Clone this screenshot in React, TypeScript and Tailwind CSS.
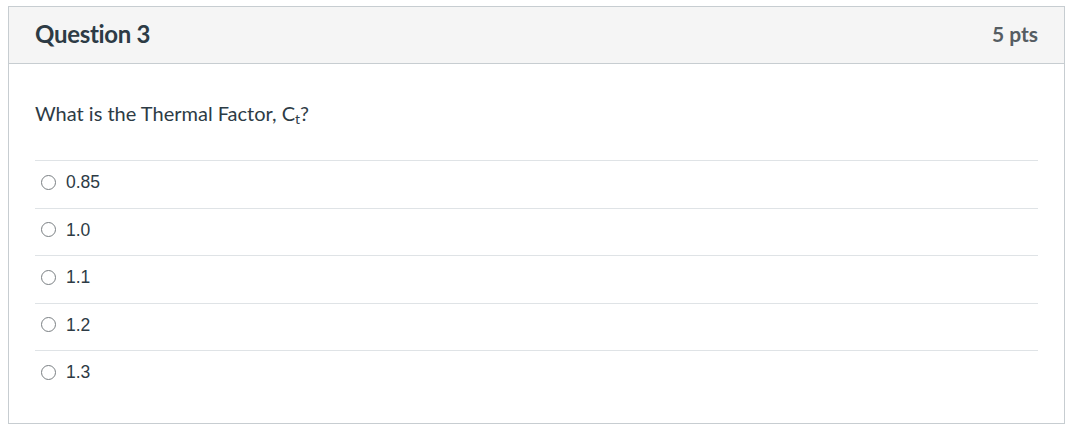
import React from "react";

const options = ["0.85", "1.0", "1.1", "1.2", "1.3"];

export default function App() {
  return (
    <div className="bg-white w-[1077px] h-[443px] pl-[8px] pt-[6px]">
      <div className="w-[1057px] h-[418px] border border-[#c7cdd1] flex flex-col">
        <div className="h-[57px] bg-[#f5f5f5] border-b border-[#c7cdd1] flex items-center justify-between px-[26px] pb-[2px] text-[#2d3b45]" style={{ fontFamily: "Lato, sans-serif" }}>
          <span className="text-[24px] font-bold tracking-[-0.3px]">Question 3</span>
          <span className="text-[21px] font-bold text-[#555d63]">5 pts</span>
        </div>
        <div className="px-[26px] pt-[36px]">
          <div className="text-[20px] leading-[26px] text-[#2d3b45] mb-[34px]" style={{ fontFamily: "Lato, sans-serif" }}>
            What is the Thermal Factor, C<sub className="text-[14px] relative top-[3px] align-baseline">t</sub>?
          </div>
          {options.map((o) => (
            <div key={o} className="h-[47.5px] border-t border-[#dfe3e6] flex items-center pl-[6px] pb-[4px]">
              <span className="w-[15px] h-[15px] rounded-full border border-[#7a7f83] bg-white mr-[10px]"></span>
              <span className="text-[17.5px] text-[#2d3b45]" style={{ fontFamily: '"Liberation Sans", Arial, sans-serif' }}>{o}</span>
            </div>
          ))}
        </div>
      </div>
    </div>
  );
}
